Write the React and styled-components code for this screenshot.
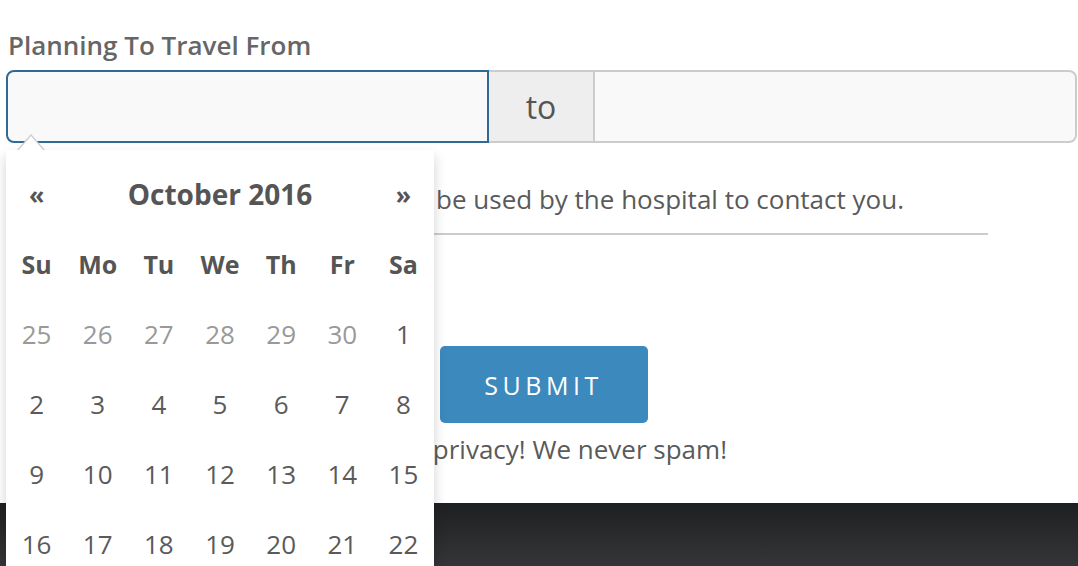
import React from "react";
import styled, { createGlobalStyle } from "styled-components";

const GlobalStyle = createGlobalStyle`
  html, body {
    margin: 0;
    padding: 0;
    height: 100%;
    overflow: hidden;
    background: #fff;
  }
  body {
    font-family: "Open Sans", "Liberation Sans", sans-serif;
    color: #555;
  }
`;

const Page = styled.div`
  display: flex;
  flex-direction: column;
  height: 566px;
`;

const FormArea = styled.div`
  position: relative;
  height: 503px;
  padding: 27px 1px 0 6px;
  box-sizing: border-box;
  background: #fff;
`;

const Label = styled.label`
  display: block;
  padding-left: 2px;
  font-size: 26px;
  line-height: 36px;
  font-weight: 600;
  color: #666;
  margin-bottom: 7px;
`;

const InputGroup = styled.div`
  display: flex;
  height: 73px;
`;

const DateInput = styled.input`
  box-sizing: border-box;
  height: 100%;
  margin: 0;
  background: #f9f9f9;
  font: inherit;
  outline: none;
  border: 2px solid ${(p) => (p.$focused ? "#2d6a96" : "#ccc")};
  border-left-width: ${(p) => (p.$side === "right" ? 0 : "2px")};
  border-radius: ${(p) => (p.$side === "left" ? "8px 0 0 8px" : "0 8px 8px 0")};
  flex: ${(p) => (p.$side === "left" ? "0 0 483px" : "1 1 auto")};
  min-width: 0;
`;

const Addon = styled.span`
  flex: 0 0 106px;
  box-sizing: border-box;
  display: flex;
  align-items: center;
  justify-content: center;
  background: #eee;
  border: 2px solid #ccc;
  border-left: 0;
  font-size: 32px;
  color: #555;
`;

const Helper = styled.p`
  width: 982px;
  box-sizing: border-box;
  margin: 38px 0 0;
  padding-right: 84px;
  text-align: right;
  font-size: 26px;
  line-height: 36px;
  color: #5a5a5a;
  white-space: nowrap;
`;

const Rule = styled.hr`
  width: 982px;
  margin: 16px 0 0;
  border: 0;
  border-top: 2px solid #ccc;
`;

const Actions = styled.div`
  display: flex;
  flex-direction: column;
  margin-top: 111px;
`;

const SubmitButton = styled.button`
  align-self: flex-start;
  margin-left: 434px;
  width: 208px;
  height: 77px;
  border: 0;
  border-radius: 5px;
  background: #3c89bd;
  color: #fff;
  font-family: inherit;
  font-size: 25px;
  letter-spacing: 4.5px;
  padding-left: 5px;
`;

const Note = styled.p`
  width: 721px;
  margin: 8px 0 0;
  text-align: right;
  font-size: 26px;
  line-height: 36px;
  color: #5a5a5a;
  white-space: nowrap;
`;

const Dropdown = styled.div`
  position: absolute;
  top: 150px;
  left: 6px;
  width: 428px;
  padding-top: 9px;
  background: #fff;
  box-shadow: 0 6px 12px rgba(0, 0, 0, 0.18);
  z-index: 2;

  &::before {
    content: "";
    position: absolute;
    top: -16px;
    left: 11px;
    border-left: 14px solid transparent;
    border-right: 14px solid transparent;
    border-bottom: 16px solid #ccc;
  }
  &::after {
    content: "";
    position: absolute;
    top: -14px;
    left: 12px;
    border-left: 13px solid transparent;
    border-right: 13px solid transparent;
    border-bottom: 15px solid #fff;
  }
`;

const Calendar = styled.table`
  width: 100%;
  border-collapse: collapse;
  table-layout: fixed;
  color: #555;
`;

const HeadCell = styled.th`
  height: 70px;
  padding: 0;
  text-align: center;
  font-weight: 700;
  font-size: ${(p) => (p.$title ? "28px" : "25px")};
  color: #555;
`;

const DayCell = styled.td`
  height: 70px;
  padding: 0;
  text-align: center;
  font-size: 26px;
  color: ${(p) => (p.$old ? "#999" : "#5a5a5a")};
`;

const Footer = styled.div`
  flex: 1;
  background: linear-gradient(#1e1f21, #353638);
`;

const weeks = [
  [25, 26, 27, 28, 29, 30, 1],
  [2, 3, 4, 5, 6, 7, 8],
  [9, 10, 11, 12, 13, 14, 15],
  [16, 17, 18, 19, 20, 21, 22],
  [23, 24, 25, 26, 27, 28, 29],
  [30, 31, 1, 2, 3, 4, 5],
];

const dows = ["Su", "Mo", "Tu", "We", "Th", "Fr", "Sa"];

const App = () => {
  return (
    <Page>
      <GlobalStyle />
      <FormArea>
        <Label>Planning To Travel From</Label>
        <InputGroup>
          <DateInput $side="left" $focused />
          <Addon>to</Addon>
          <DateInput $side="right" />
        </InputGroup>

        <Helper>Your phone number will be used by the hospital to contact you.</Helper>
        <Rule />

        <Actions>
          <SubmitButton>SUBMIT</SubmitButton>
          <Note>We respect your privacy! We never spam!</Note>
        </Actions>

        <Dropdown>
          <Calendar>
            <thead>
              <tr>
                <HeadCell>«</HeadCell>
                <HeadCell colSpan={5} $title>
                  October 2016
                </HeadCell>
                <HeadCell>»</HeadCell>
              </tr>
              <tr>
                {dows.map((d) => (
                  <HeadCell key={d}>{d}</HeadCell>
                ))}
              </tr>
            </thead>
            <tbody>
              {weeks.map((week, wi) => (
                <tr key={wi}>
                  {week.map((day, di) => (
                    <DayCell
                      key={di}
                      $old={(wi === 0 && day > 7) || (wi === 5 && day < 7)}
                    >
                      {day}
                    </DayCell>
                  ))}
                </tr>
              ))}
            </tbody>
          </Calendar>
        </Dropdown>
      </FormArea>
      <Footer />
    </Page>
  );
};

export default App;
